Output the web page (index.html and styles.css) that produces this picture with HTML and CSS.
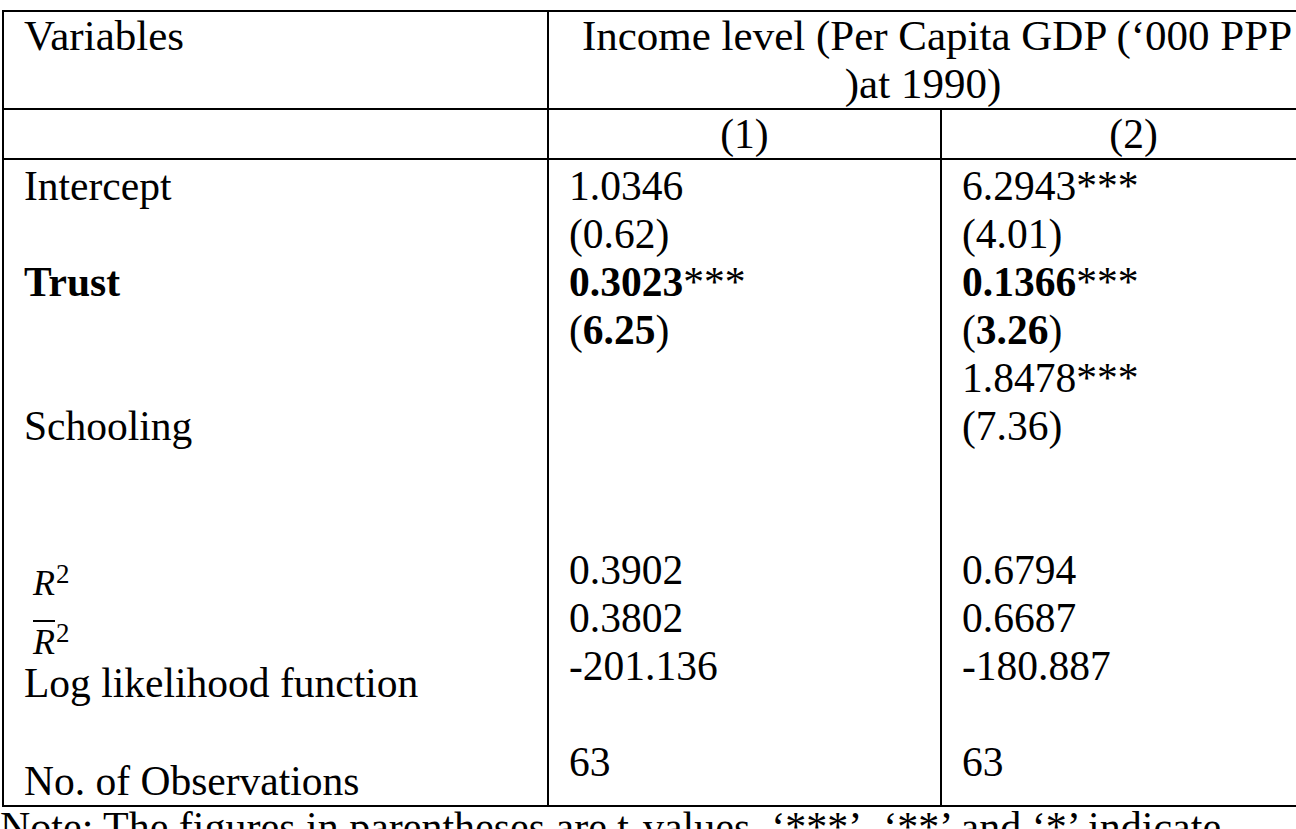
FILE: index.html
```html
<!DOCTYPE html>
<html lang="en">
<head>
    <meta charset="UTF-8">
    <meta name="viewport" content="width=device-width, initial-scale=1.0">
    <title>Trust and Income Level</title>
    <link rel="stylesheet" href="styles.css">
</head>
<body>
    <table class="results">
        <colgroup>
            <col class="col-var">
            <col class="col-one">
            <col class="col-two">
        </colgroup>
        <thead>
            <tr class="head-row">
                <th class="var-head">Variables</th>
                <th class="dep-head" colspan="2">Income level (Per Capita GDP (‘000 PPP<br><span class="head-tail">)at 1990)</span></th>
            </tr>
            <tr class="model-row">
                <th></th>
                <th class="model">(1)</th>
                <th class="model">(2)</th>
            </tr>
        </thead>
        <tbody>
            <tr>
                <!-- variable names -->
                <td>
                    <div class="line">Intercept</div>
                    <div class="line"></div>
                    <div class="line"><b>Trust</b></div>
                    <div class="line"></div>
                    <div class="line"></div>
                    <div class="line">Schooling</div>
                    <div class="line"></div>
                    <div class="line"></div>
                    <div class="line"><span class="math math-low"><i class="math-r">R</i><span class="math-sup">2</span></span></div>
                    <div class="line"><span class="math math-lower"><i class="math-r bar">R</i><span class="math-sup">2</span></span></div>
                    <div class="line shift-log">Log likelihood function</div>
                    <div class="line"></div>
                    <div class="line shift-obs">No. of Observations</div>
                </td>
                <!-- model 1 -->
                <td>
                    <div class="line">1.0346</div>
                    <div class="line">(0.62)</div>
                    <div class="line"><b>0.3023</b>***</div>
                    <div class="line">(<b>6.25</b>)</div>
                    <div class="line"></div>
                    <div class="line"></div>
                    <div class="line"></div>
                    <div class="line"></div>
                    <div class="line">0.3902</div>
                    <div class="line">0.3802</div>
                    <div class="line">-201.136</div>
                    <div class="line"></div>
                    <div class="line">63</div>
                </td>
                <!-- model 2 -->
                <td>
                    <div class="line">6.2943***</div>
                    <div class="line">(4.01)</div>
                    <div class="line"><b>0.1366</b>***</div>
                    <div class="line">(<b>3.26</b>)</div>
                    <div class="line">1.8478***</div>
                    <div class="line">(7.36)</div>
                    <div class="line"></div>
                    <div class="line"></div>
                    <div class="line">0.6794</div>
                    <div class="line">0.6687</div>
                    <div class="line">-180.887</div>
                    <div class="line"></div>
                    <div class="line">63</div>
                </td>
            </tr>
        </tbody>
    </table>
    <p class="note">Note: The figures in parentheses are t-values. ‘***’, ‘**’ and ‘*’ indicate</p>
</body>
</html>
```

FILE: styles.css
```css
body {
    margin: 0;
    background-color: #fff;
    color: #000;
    font-family: 'Liberation Serif', 'Times New Roman', serif;
    font-size: 41.5px;
    overflow: hidden;
}

.results {
    margin: 10px 0 0 2px;
    width: 1323px;
    table-layout: fixed;
    border-collapse: collapse;
}

.col-var { width: 545px; }
.col-one { width: 393px; }
.col-two { width: 385px; }

.results th,
.results td {
    border: 2px solid #000;
    padding: 0 20px;
    vertical-align: top;
    font-weight: normal;
    line-height: 48px;
}

.results td {
    padding-top: 2px;
}

.var-head {
    text-align: left;
}

.dep-head,
.model {
    text-align: center;
}

/* header row and (1)/(2) row */
.head-row th {
    height: 96px;
    font-size: 43px;
}

.head-tail {
    margin-right: 28px;
}

.model-row th {
    height: 48px;
}

/* one printed line of the table body */
.line {
    height: 48px;
    white-space: nowrap;
}

.shift-log {
    margin-top: 17px;
}

.shift-obs {
    margin-top: 2px;
}

/* R squared labels */
.math {
    display: inline-block;
    padding-left: 9px;
    font-size: 36px;
    line-height: 1;
}

.math-low {
    vertical-align: -11px;
}

.math-lower {
    vertical-align: -22px;
}

.math-r {
    font-style: italic;
}

.math-r.bar {
    text-decoration: overline;
    text-decoration-thickness: 2px;
}

.math-sup {
    font-size: 27px;
    vertical-align: 12px;
    margin-left: 1px;
}

.note {
    margin: -4px 0 0 0;
    white-space: nowrap;
    font-size: 42px;
    line-height: 48px;
}
```
